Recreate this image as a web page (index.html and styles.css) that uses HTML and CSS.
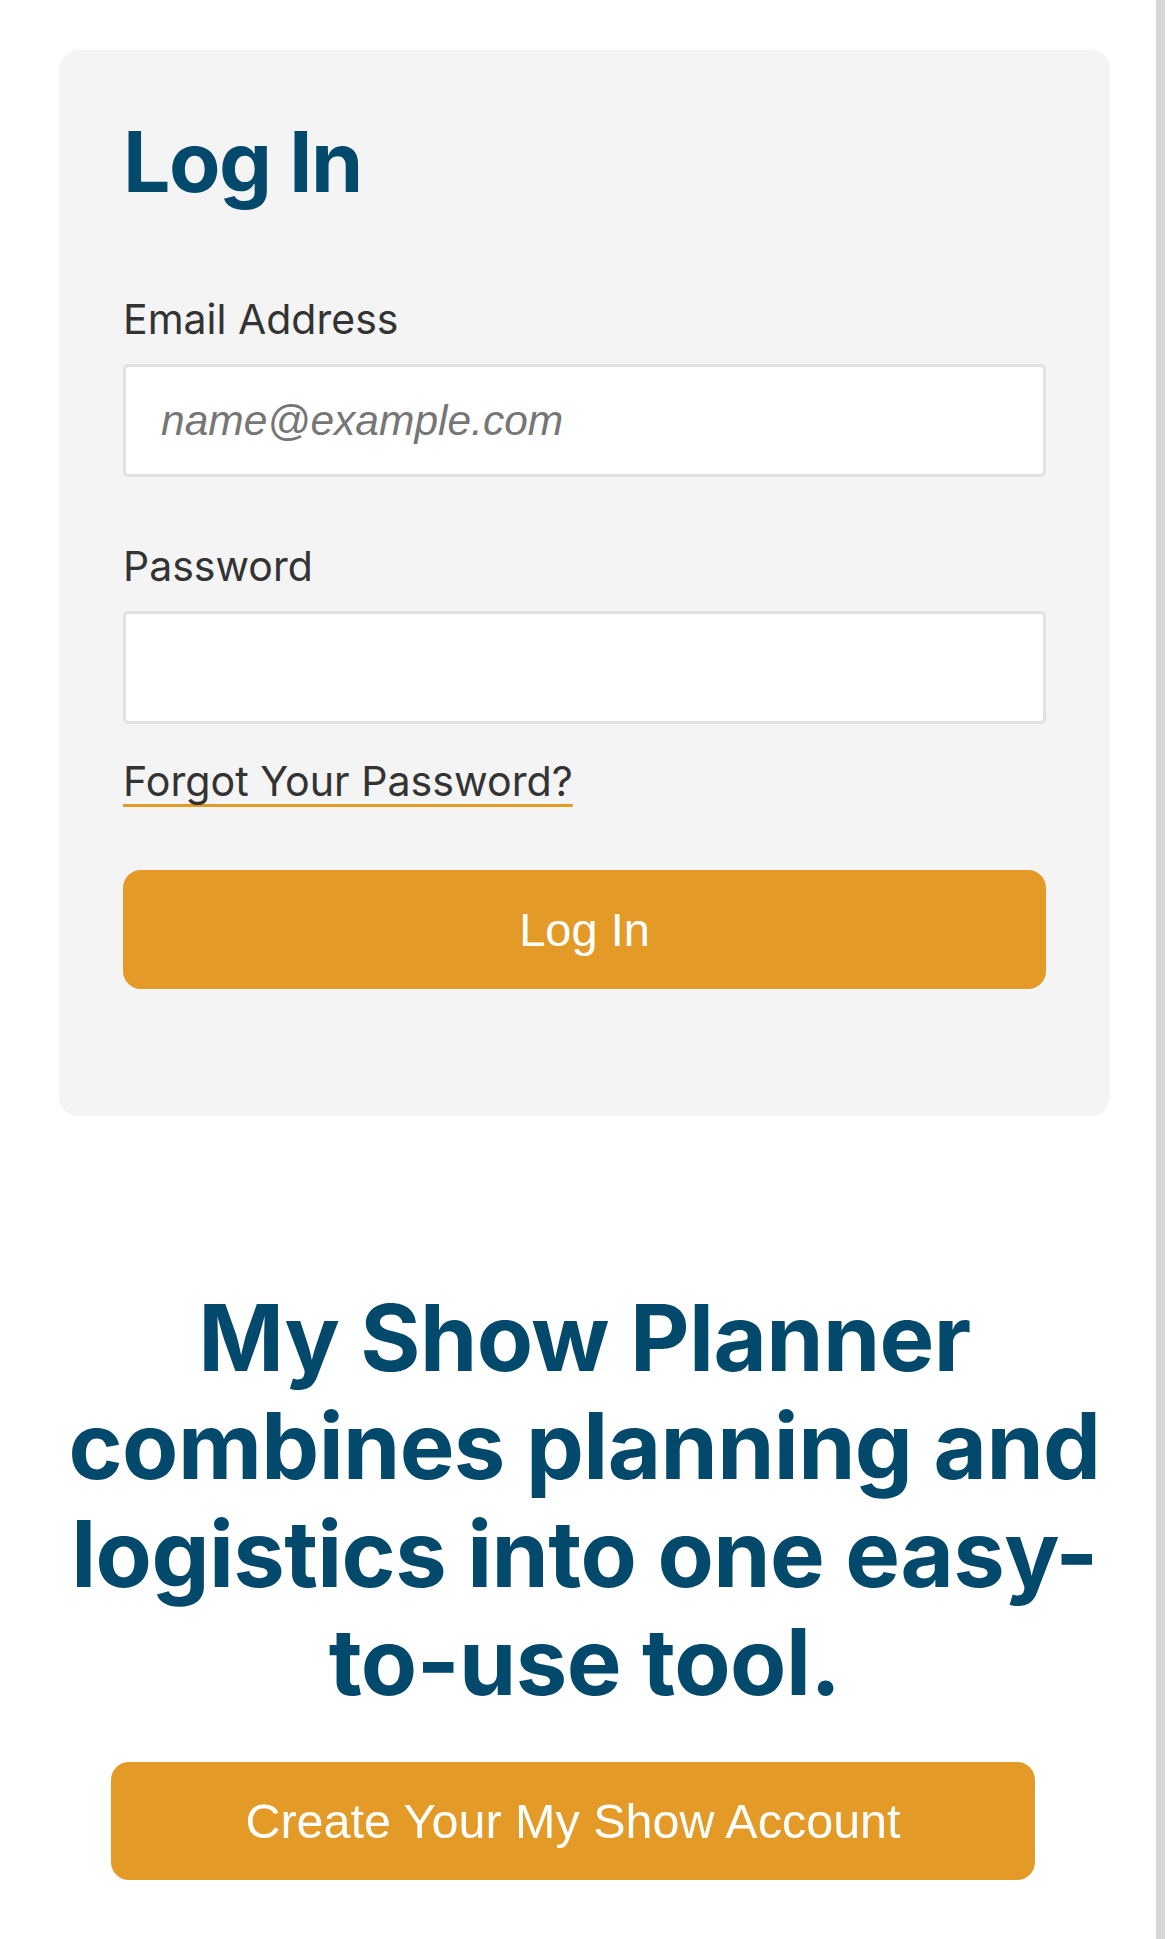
FILE: index.html
```html
<!DOCTYPE html>
<html lang="en">
<head>
<meta charset="utf-8">
<title>Log In - My Show Planner</title>
<link rel="stylesheet" href="styles.css">
</head>
<body>
<main class="page">
  <section class="card">
    <h1 class="card-title">Log In</h1>
    <form class="form">
      <label class="label" for="email">Email Address</label>
      <input class="field" id="email" type="email" placeholder="name@example.com">
      <label class="label label-pw" for="pw">Password</label>
      <input class="field" id="pw" type="password">
      <a class="forgot" href="#">Forgot Your Password?</a>
      <button class="btn btn-login" type="button">Log In</button>
    </form>
  </section>
  <section class="promo">
    <h2 class="promo-title">My Show Planner<br>combines planning and<br>logistics into one easy-<br>to-use tool.</h2>
    <a class="btn btn-create" href="#">Create Your My Show Account</a>
  </section>
</main>
<div class="scrollbar"></div>
</body>
</html>
```

FILE: styles.css
```css
* { box-sizing: border-box; }
html, body { margin: 0; padding: 0; background: #ffffff; }
body { font-family: Inter, "Noto Sans", sans-serif; color: #333333; }

.page { padding-top: 50px; padding-bottom: 60px; }

.card {
  margin-left: 59px;
  width: 1051px;
  background: #f4f4f4;
  border-radius: 20px;
  padding: 70px 64px 127px 64px;
}

.card-title {
  margin: 0;
  font-size: 84px;
  line-height: 84px;
  font-weight: 700;
  color: #03496b;
  letter-spacing: -1.5px;
}

.form { display: flex; flex-direction: column; align-items: flex-start; margin-top: 94px; }

.label {
  font-size: 41px;
  line-height: 42px;
  font-weight: 400;
  color: #333333;
  margin-bottom: 24px;
}
.label-pw { margin-top: 68px; }

.field {
  width: 100%;
  height: 113px;
  margin: 0;
  border: 3px solid #e2e2e2;
  border-radius: 5px;
  background: #ffffff;
  padding: 0 35px;
  font-family: "Liberation Sans", Arial, sans-serif;
  font-size: 42.5px;
  color: #333333;
  outline: none;
}
.field::placeholder { color: #767676; font-style: italic; }

.forgot {
  margin-top: 36px;
  font-size: 41.2px;
  line-height: 42px;
  color: #333333;
  text-decoration: underline;
  text-decoration-color: #e39a27;
  text-decoration-thickness: 3px;
  text-underline-offset: 8px;
  text-decoration-skip-ink: none;
}

.btn {
  display: flex;
  align-items: center;
  justify-content: center;
  background: #e49a26;
  color: #ffffff;
  border: none;
  border-radius: 18px;
  font-family: "Liberation Sans", Arial, sans-serif;
  font-size: 47px;
  text-decoration: none;
}
.btn-login { width: 100%; height: 119px; margin-top: 68px; }

.promo { padding-top: 168px; }
.promo-title {
  margin: 0 0 0 59px;
  width: 1051px;
  text-align: center;
  font-size: 92px;
  line-height: 108px;
  font-weight: 700;
  color: #03496b;
  letter-spacing: -0.6px;
}
.btn-create {
  margin-top: 46px;
  margin-left: 111px;
  width: 924px;
  height: 118px;
  font-size: 48.5px;
}

.scrollbar {
  position: fixed;
  top: 0;
  bottom: 0;
  left: 1156px;
  width: 9px;
  background: #d7d7d7;
}
```
